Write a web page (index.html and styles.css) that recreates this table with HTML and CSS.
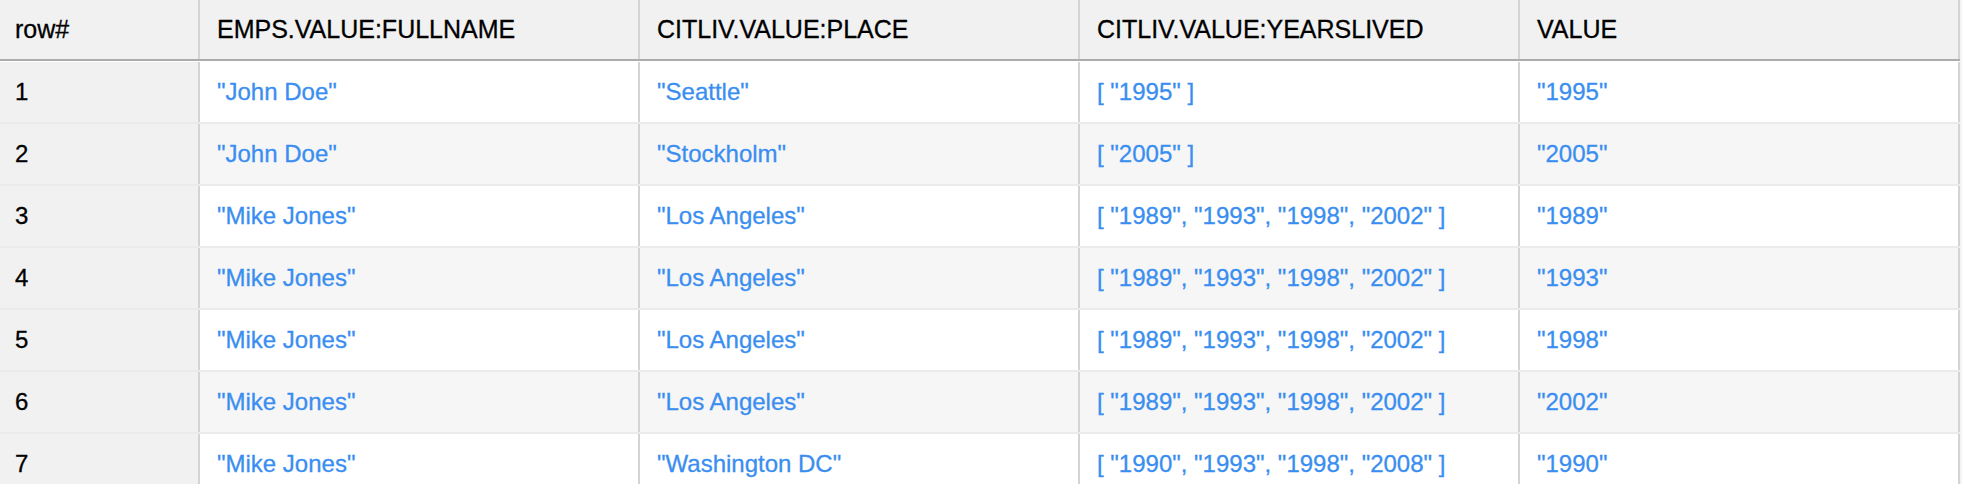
FILE: index.html
```html
<!DOCTYPE html>
<html>
<head>
<meta charset="utf-8">
<link rel="stylesheet" href="styles.css">
</head>
<body>
<div class="grid">
  <div class="row head">
    <div class="cell idx">row#</div>
    <div class="cell">EMPS.VALUE:FULLNAME</div>
    <div class="cell">CITLIV.VALUE:PLACE</div>
    <div class="cell">CITLIV.VALUE:YEARSLIVED</div>
    <div class="cell">VALUE</div>
  </div>
  <div class="row">
    <div class="cell idx">1</div>
    <div class="cell val">"John Doe"</div>
    <div class="cell val">"Seattle"</div>
    <div class="cell val">[ "1995" ]</div>
    <div class="cell val">"1995"</div>
  </div>
  <div class="row alt">
    <div class="cell idx">2</div>
    <div class="cell val">"John Doe"</div>
    <div class="cell val">"Stockholm"</div>
    <div class="cell val">[ "2005" ]</div>
    <div class="cell val">"2005"</div>
  </div>
  <div class="row">
    <div class="cell idx">3</div>
    <div class="cell val">"Mike Jones"</div>
    <div class="cell val">"Los Angeles"</div>
    <div class="cell val">[ "1989", "1993", "1998", "2002" ]</div>
    <div class="cell val">"1989"</div>
  </div>
  <div class="row alt">
    <div class="cell idx">4</div>
    <div class="cell val">"Mike Jones"</div>
    <div class="cell val">"Los Angeles"</div>
    <div class="cell val">[ "1989", "1993", "1998", "2002" ]</div>
    <div class="cell val">"1993"</div>
  </div>
  <div class="row">
    <div class="cell idx">5</div>
    <div class="cell val">"Mike Jones"</div>
    <div class="cell val">"Los Angeles"</div>
    <div class="cell val">[ "1989", "1993", "1998", "2002" ]</div>
    <div class="cell val">"1998"</div>
  </div>
  <div class="row alt">
    <div class="cell idx">6</div>
    <div class="cell val">"Mike Jones"</div>
    <div class="cell val">"Los Angeles"</div>
    <div class="cell val">[ "1989", "1993", "1998", "2002" ]</div>
    <div class="cell val">"2002"</div>
  </div>
  <div class="row">
    <div class="cell idx">7</div>
    <div class="cell val">"Mike Jones"</div>
    <div class="cell val">"Washington DC"</div>
    <div class="cell val">[ "1990", "1993", "1998", "2008" ]</div>
    <div class="cell val">"1990"</div>
  </div>
</div>
</body>
</html>
```
FILE: styles.css
```css
html, body {
  margin: 0;
  padding: 0;
  background: #f4f4f4;
  overflow: hidden;
}
.grid {
  width: 1960px;
  font-family: "Liberation Sans", Arial, Helvetica, sans-serif;
  font-size: 24px;
  color: #000;
  background: #fff;
  -webkit-text-stroke: 0.3px currentColor;
}
.row {
  display: grid;
  grid-template-columns: 200px 440px 440px 440px 440px;
  height: 62px;
  background: #fff;
  border-bottom: 2px solid #ebebeb;
  box-sizing: border-box;
}
.row.alt {
  background: #f6f6f6;
}
.row.head {
  height: 61px;
  background: #f1f1f1;
  border-bottom: 2px solid #acacac;
  font-size: 25px;
}
.row.head + .row {
  height: 63px;
  padding-top: 1px;
}
.cell {
  display: flex;
  align-items: center;
  padding-left: 17px;
  border-right: 2px solid #d4d4d4;
  white-space: nowrap;
  overflow: hidden;
}
.cell.idx {
  padding-left: 15px;
  background: #f1f1f1;
}
.row.head .cell.idx {
  background: transparent;
}
.cell.val {
  color: #3a8ef0;
}
```
